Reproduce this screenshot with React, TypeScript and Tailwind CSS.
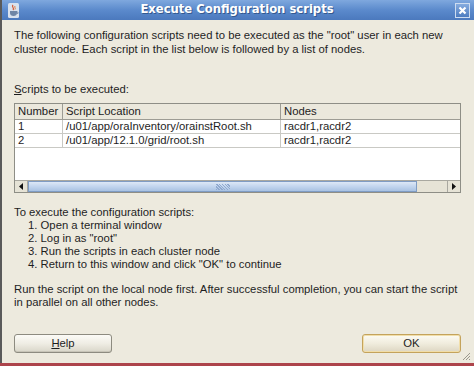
import React from "react";

const font = { fontFamily: '"Liberation Sans", Arial, sans-serif' };

export default function App() {
  return (
    <div className="w-[474px] h-[366px] overflow-hidden bg-[#ad444b] flex flex-col" style={font}>
      <div className="h-[363px] flex flex-col bg-[#edeade] border-l-[2px] border-[#5a5a5a]">
        {/* Title bar */}
        <div className="h-[20px] shrink-0 flex items-center bg-gradient-to-b from-[#7fa8de] via-[#5b8acc] to-[#4b79bd] relative">
          <div className="ml-[6px] w-[11px] h-[15px] flex items-center justify-center">
            <svg width="11" height="15" viewBox="0 0 11 15">
              <rect x="0" y="0" width="11" height="15" rx="1.5" fill="#d9e2ee" />
              <path d="M5 2 C3 4 7 5 5 7" stroke="#d4552e" strokeWidth="1.2" fill="none" />
              <path d="M7 3 C6 4.5 8 5 7 6.5" stroke="#e07a3a" strokeWidth="1" fill="none" />
              <path d="M2 8 H9 V10 C9 12 7.5 13 5.5 13 C3.5 13 2 12 2 10 Z" fill="#6f86a6" />
              <path d="M9 9 H10 V10.5 H9" stroke="#6f86a6" strokeWidth="0.8" fill="none" />
            </svg>
          </div>
          <div className="flex-1 text-center text-white font-bold text-[11.6px] [text-shadow:1px_1px_0_#34598f]" style={{ fontFamily: '"DejaVu Sans", sans-serif' }}>
            Execute Configuration scripts
          </div>
          <div className="w-[15px] h-[15px] mr-[4px] border border-[#cddcf0] bg-gradient-to-b from-[#86acdf] to-[#4d7cc0] flex items-center justify-center">
            <svg width="9" height="9" viewBox="0 0 9 9">
              <path d="M1.5 1.5 L7.5 7.5 M7.5 1.5 L1.5 7.5" stroke="white" strokeWidth="2.2" />
            </svg>
          </div>
        </div>

        <div className="flex-1 flex flex-col pl-[12px] pr-[13px] text-[11.3px] text-[#1e1e1e] relative whitespace-nowrap">
          <p className="mt-[8px] leading-[14px]">
            The following configuration scripts need to be executed as the "root" user in each new
            <br />
            cluster node. Each script in the list below is followed by a list of nodes.
          </p>

          <p className="mt-[26px] leading-[14px]">
            <span className="underline">S</span>cripts to be executed:
          </p>

          {/* Table */}
          <div className="mt-[7px] h-[90px] border border-[#8e8e86] bg-white flex flex-col">
            <div className="flex h-[16px] bg-[#ebe8dc] border-b border-[#9d9c94] text-[#222] leading-[15px]">
              <div className="w-[48px] pl-[3px] border-r border-[#9d9c94]">Number</div>
              <div className="w-[218px] pl-[3px] border-r border-[#9d9c94]">Script Location</div>
              <div className="flex-1 pl-[3px]">Nodes</div>
            </div>
            {[
              ["1", "/u01/app/oraInventory/orainstRoot.sh", "racdr1,racdr2"],
              ["2", "/u01/app/12.1.0/grid/root.sh", "racdr1,racdr2"],
            ].map((r) => (
              <div key={r[0]} className="flex h-[14px] border-b border-[#c9c9c4] leading-[13px]">
                <div className="w-[48px] pl-[3px] border-r border-[#c9c9c4]">{r[0]}</div>
                <div className="w-[218px] pl-[3px] border-r border-[#c9c9c4]">{r[1]}</div>
                <div className="flex-1 pl-[3px]">{r[2]}</div>
              </div>
            ))}
            <div className="flex-1" />
            <div className="h-[12px] flex bg-[#e6e3d6] border-t border-[#a9a8a0]">
              <div className="w-[13px] flex items-center justify-center border-r border-[#a9a8a0]">
                <svg width="4" height="7" viewBox="0 0 4 7"><path d="M4 0 L0 3.5 L4 7 Z" fill="#111" /></svg>
              </div>
              <div className="w-[389px] bg-gradient-to-b from-[#dde8f6] via-[#c2d5ee] to-[#a9c2e2] border border-[#7f9cc4] flex items-center justify-center">
                <div className="w-[14px] h-[6px] bg-[repeating-linear-gradient(45deg,#8fa9cf_0px,#8fa9cf_1px,transparent_1px,transparent_2px)]" />
              </div>
              <div className="flex-1" />
              <div className="w-[13px] flex items-center justify-center border-l border-[#a9a8a0]">
                <svg width="4" height="7" viewBox="0 0 4 7"><path d="M0 0 L4 3.5 L0 7 Z" fill="#111" /></svg>
              </div>
            </div>
          </div>

          <div className="mt-[13px] leading-[13px]">
            <p>To execute the configuration scripts:</p>
            <div className="pl-[14px]">
              <p>1. Open a terminal window</p>
              <p>2. Log in as "root"</p>
              <p>3. Run the scripts in each cluster node</p>
              <p>4. Return to this window and click "OK" to continue</p>
            </div>
          </div>

          <p className="mt-[12px] leading-[13px]">
            Run the script on the local node first. After successful completion, you can start the script
            <br />
            in parallel on all other nodes.
          </p>

          <div className="mt-[25px] flex justify-between pr-[0px]">
            <button className="w-[98px] h-[19px] rounded-[3px] border border-[#8d8b80] bg-gradient-to-b from-[#fcfbf7] via-[#efede4] to-[#d9d6c9] text-[11.3px] leading-[17px] shadow-[inset_0_-1px_0_#c8c5b8]">
              <span className="underline">H</span>elp
            </button>
            <button className="w-[99px] h-[19px] rounded-[3px] border border-[#c4a35c] bg-gradient-to-b from-[#fdfbf3] via-[#f0ecdd] to-[#ddd6c2] text-[11.3px] leading-[17px] shadow-[inset_0_0_0_1px_#f1dea9]">
              OK
            </button>
          </div>
          <svg className="absolute right-[3px] bottom-[2px]" width="9" height="9" viewBox="0 0 9 9">
            <path d="M8 1 L1 8 M8 4 L4 8 M8 7 L7 8" stroke="#9a988d" strokeWidth="1" />
          </svg>
        </div>
      </div>
    </div>
  );
}
